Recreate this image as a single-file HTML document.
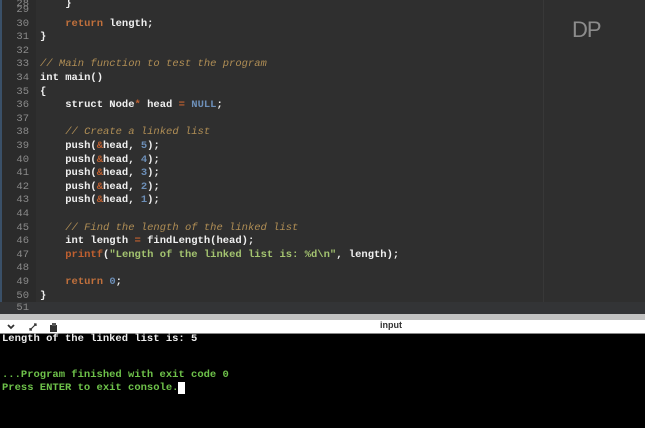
<!DOCTYPE html>
<html><head><style>
*{margin:0;padding:0;box-sizing:border-box}
body{width:645px;height:428px;overflow:hidden;background:#000;position:relative;font-family:"Liberation Mono",monospace}
#ed{position:absolute;left:0;top:0;width:645px;height:314px;background:#2f2f2f}
#gut{position:absolute;left:0;top:0;width:36px;height:302px;background:#2b2b2b;border-left:2px solid #3a5068}
#bar{position:absolute;left:0;top:302px;width:645px;height:12px;background:#333436}
#pm{position:absolute;left:543px;top:0;width:1px;height:302px;background:#383838}
.l{position:absolute;left:0;height:13.6px;font-size:10.5px;line-height:13.6px;white-space:pre;color:#f0f0f0;font-weight:bold}
.n{position:absolute;left:9px;width:20px;text-align:right;color:#8a8a8a;font-weight:normal}
.c{position:absolute;left:40px}
.k{color:#c0703c}.cm{color:#b08e55;font-style:italic;font-weight:normal}.num{color:#6d8fb8}.op{color:#c06030}.s{color:#a4c470}
#gray{position:absolute;left:0;top:314px;width:645px;height:6px;background:#c2c2c2}
#tb{position:absolute;left:0;top:320px;width:645px;height:14px;background:#fff;border-bottom:1px solid #888}
#tb .t{position:absolute;left:380px;top:0;font:bold 9px "Liberation Sans",sans-serif;color:#333;line-height:11px}
.o{position:absolute;left:2px;font-size:10.5px;line-height:13px;white-space:pre;font-weight:bold}
#dp{position:absolute;left:572px;top:17px;color:#8c8c8c;font:22px "Liberation Sans",sans-serif;letter-spacing:-1px}
</style></head><body>
<div id="ed"><div id="gut"></div><div id="pm"></div><div id="bar"></div>
<div id="dp">DP</div>
<div class="l" style="top:-2px"><span class="n">28</span><span class="c">    }</span></div>
<div class="l" style="top:4px"><span class="n">29</span></div>
<div class="l" style="top:17.6px"><span class="n">30</span><span class="c">    <span class="k">return</span> length;</span></div>
<div class="l" style="top:31.2px"><span class="n">31</span><span class="c">}</span></div>
<div class="l" style="top:44.8px"><span class="n">32</span></div>
<div class="l" style="top:58.4px"><span class="n">33</span><span class="c"><span class="cm">// Main function to test the program</span></span></div>
<div class="l" style="top:72px"><span class="n">34</span><span class="c">int main()</span></div>
<div class="l" style="top:85.6px"><span class="n">35</span><span class="c">{</span></div>
<div class="l" style="top:99.2px"><span class="n">36</span><span class="c">    struct Node<span class="op">*</span> head <span class="op">=</span> <span class="num">NULL</span>;</span></div>
<div class="l" style="top:112.8px"><span class="n">37</span></div>
<div class="l" style="top:126.4px"><span class="n">38</span><span class="c">    <span class="cm">// Create a linked list</span></span></div>
<div class="l" style="top:140px"><span class="n">39</span><span class="c">    push(<span class="op">&amp;</span>head, <span class="num">5</span>);</span></div>
<div class="l" style="top:153.6px"><span class="n">40</span><span class="c">    push(<span class="op">&amp;</span>head, <span class="num">4</span>);</span></div>
<div class="l" style="top:167.2px"><span class="n">41</span><span class="c">    push(<span class="op">&amp;</span>head, <span class="num">3</span>);</span></div>
<div class="l" style="top:180.8px"><span class="n">42</span><span class="c">    push(<span class="op">&amp;</span>head, <span class="num">2</span>);</span></div>
<div class="l" style="top:194.4px"><span class="n">43</span><span class="c">    push(<span class="op">&amp;</span>head, <span class="num">1</span>);</span></div>
<div class="l" style="top:208px"><span class="n">44</span></div>
<div class="l" style="top:221.6px"><span class="n">45</span><span class="c">    <span class="cm">// Find the length of the linked list</span></span></div>
<div class="l" style="top:235.2px"><span class="n">46</span><span class="c">    int length <span class="op">=</span> findLength(head);</span></div>
<div class="l" style="top:248.8px"><span class="n">47</span><span class="c">    <span class="op">printf</span>(<span class="s">"Length of the linked list is: %d\n"</span>, length);</span></div>
<div class="l" style="top:262.4px"><span class="n">48</span></div>
<div class="l" style="top:276px"><span class="n">49</span><span class="c">    <span class="k">return</span> <span class="num">0</span>;</span></div>
<div class="l" style="top:289.6px"><span class="n">50</span><span class="c">}</span></div>
<div class="l" style="top:302px"><span class="n">51</span></div>
</div>
<div id="gray"></div>
<div id="tb">
<svg width="70" height="14" style="position:absolute;left:0;top:0">
<path d="M8 5l3 3 3-3" stroke="#333" stroke-width="1.8" fill="none"/>
<path d="M30 10l6-6M34 4h2v2M30 8v2h2" stroke="#333" stroke-width="1.2" fill="none"/>
<rect x="50" y="5" width="7" height="7" fill="#333"/><rect x="52" y="3" width="4" height="3" fill="#555"/>
</svg>
<span class="t">input</span></div>
<div class="o" style="top:333px;color:#eee">Length of the linked list is: 5</div>
<div class="o" style="top:369px;color:#6ec24a">...Program finished with exit code 0</div>
<div class="o" style="top:382px;color:#6ec24a">Press ENTER to exit console.<span style="background:#fff;color:#fff"> </span></div>
</body></html>
